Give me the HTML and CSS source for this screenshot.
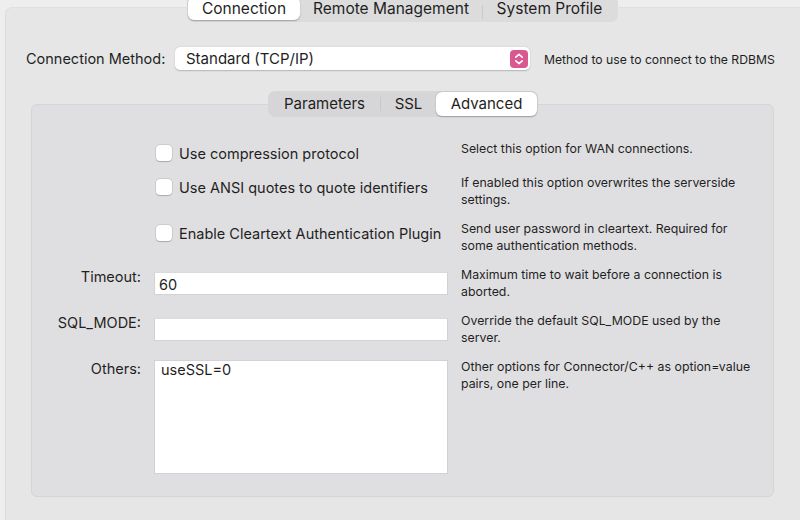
FILE: index.html
```html
<!DOCTYPE html>
<html>
<head>
<meta charset="utf-8">
<link rel="stylesheet" href="styles.css">
</head>
<body>
<div class="window">
  <div class="seg top-seg">
    <div class="seg-item sel w-conn">Connection</div>
    <div class="seg-item w-remote">Remote Management</div>
    <div class="sep"></div>
    <div class="seg-item w-sys">System Profile</div>
  </div>

  <div class="method-row">
    <div class="method-label">Connection Method:</div>
    <div class="select">
      <span class="select-text">Standard (TCP/IP)</span>
      <span class="stepper">
        <svg width="18" height="18" viewBox="0 0 18 18">
          <rect x="0" y="0" width="18" height="18" rx="4" fill="#d8588f"/>
          <path d="M5.8 7.2 L9 4.4 L12.2 7.2" fill="none" stroke="#fff" stroke-width="1.6" stroke-linecap="round" stroke-linejoin="round"/>
          <path d="M5.8 10.8 L9 13.6 L12.2 10.8" fill="none" stroke="#fff" stroke-width="1.6" stroke-linecap="round" stroke-linejoin="round"/>
        </svg>
      </span>
    </div>
    <div class="method-desc">Method to use to connect to the RDBMS</div>
  </div>

  <div class="inner-tabs-wrap">
    <div class="seg inner-seg">
      <div class="seg-item w-params">Parameters</div>
      <div class="sep"></div>
      <div class="seg-item w-ssl">SSL</div>
      <div class="seg-item sel w-adv">Advanced</div>
    </div>
  </div>

  <div class="panel">
    <div class="form">
      <div class="lbl"></div>
      <div class="ctl check"><span class="box"></span><span>Use compression protocol</span></div>
      <div class="desc">Select this option for WAN connections.</div>

      <div class="lbl"></div>
      <div class="ctl check"><span class="box"></span><span>Use ANSI quotes to quote identifiers</span></div>
      <div class="desc">If enabled this option overwrites the serverside settings.</div>

      <div class="lbl"></div>
      <div class="ctl check"><span class="box"></span><span>Enable Cleartext Authentication Plugin</span></div>
      <div class="desc">Send user password in cleartext. Required for some authentication methods.</div>

      <div class="lbl">Timeout:</div>
      <div class="ctl"><div class="input">60</div></div>
      <div class="desc">Maximum time to wait before a connection is aborted.</div>

      <div class="lbl">SQL_MODE:</div>
      <div class="ctl"><div class="input"></div></div>
      <div class="desc">Override the default SQL_MODE used by the server.</div>

      <div class="lbl">Others:</div>
      <div class="ctl"><div class="textarea">useSSL=0</div></div>
      <div class="desc">Other options for Connector/C++ as option=value pairs, one per line.</div>
    </div>
  </div>
</div>
</body>
</html>
```

FILE: styles.css
```css
* { box-sizing: border-box; }
html, body { margin: 0; padding: 0; }
body {
  width: 800px;
  height: 520px;
  overflow: hidden;
  background: #eeeeef;
  font-family: "Inter", "Liberation Sans", sans-serif;
  color: #1f1f1f;
  padding-left: 5px;
  padding-top: 7px;
}
.window {
  background: #e6e6e7;
  border-left: 1px solid #dcdcdd;
  border-top: 1px solid #e0e0e1;
  border-top-left-radius: 7px;
  height: 520px;
  width: 820px;
}

/* segmented controls */
.seg {
  display: flex;
  align-items: center;
  background: #dcdcdd;
  border-radius: 7px;
  position: relative;
}
.seg-item {
  display: flex;
  align-items: center;
  justify-content: center;
  height: 100%;
  border-radius: 6px;
}
.seg-item.sel {
  background: #fff;
  box-shadow: 0 0.5px 1.5px rgba(0,0,0,0.28);
}
.sep { width: 1px; height: 14px; background: #c9c9ca; }

.top-seg {
  margin-left: 181px;
  margin-top: -12px;
  width: 431px;
  height: 26px;
  padding: 1px 1px 2px;
  font-size: 15.5px;
}
.top-seg .seg-item { padding-bottom: 1px; }
.top-seg .sep { margin-top: 6px; }
.w-conn { width: 112px; }
.w-remote { width: 182px; }
.w-sys { width: 133px; }

/* connection method */
.method-row {
  display: flex;
  align-items: center;
  margin-top: 25px;
  height: 23px;
}
.method-label {
  font-size: 14.5px;
  margin-left: 20px;
  width: 149px;
}
.select {
  width: 355px;
  height: 23px;
  background: #fff;
  border-radius: 5px;
  box-shadow: 0 0.5px 1.5px rgba(0,0,0,0.22);
  display: flex;
  align-items: center;
  justify-content: space-between;
  padding-left: 11px;
  padding-right: 2px;
  font-size: 15px;
}
.select-text { padding-bottom: 1px; }
.stepper { display: flex; }
.method-desc {
  font-size: 12.2px;
  margin-left: 14px;
  padding-top: 2px;
}

/* inner tabs */
.inner-tabs-wrap {
  margin-top: 21px;
  margin-bottom: -13px;
  position: relative;
  z-index: 1;
  padding-left: 262px;
}
.inner-seg {
  width: 270px;
  height: 26px;
  padding: 1px;
  font-size: 15px;
  background: #d6d6d8;
}
.inner-seg .seg-item { padding-bottom: 1px; }
.w-params { width: 111px; }
.w-ssl { width: 55px; }
.w-adv { width: 101px; }

/* panel */
.panel {
  margin-left: 25px;
  width: 743px;
  background: #dfdfe1;
  border: 1px solid #d5d5d7;
  border-radius: 6px;
  padding-top: 36px;
  padding-bottom: 22px;
}
.form {
  display: grid;
  grid-template-columns: 109px 294px 296px;
  grid-template-rows: 34px 46px 46px 46px 46px auto;
  column-gap: 13px;
}
.lbl {
  font-size: 14.5px;
  text-align: right;
  padding-top: 2px;
  line-height: 16px;
}
.desc {
  font-size: 12.35px;
  line-height: 16.5px;
}
.ctl { font-size: 14.5px; }
.check {
  display: flex;
  align-items: center;
  padding-left: 2px;
  padding-top: 2px;
  height: 22px;
  gap: 7px;
}
.box {
  width: 16px;
  height: 16px;
  background: #fff;
  border-radius: 4px;
  box-shadow: 0 0 0 0.5px rgba(0,0,0,0.14), 0 0.5px 1px rgba(0,0,0,0.18);
  flex: none;
}
.input {
  margin-top: 5px;
  height: 23px;
  background: #fff;
  border: 1px solid #d2d2d4;
  border-top-color: #dadadc;
  padding: 3px 4px 0;
  font-size: 14.5px;
}
.textarea {
  margin-top: 1px;
  height: 114px;
  background: #fff;
  border: 1px solid #d2d2d4;
  padding: 0 6px;
  font-size: 14.5px;
}
```
